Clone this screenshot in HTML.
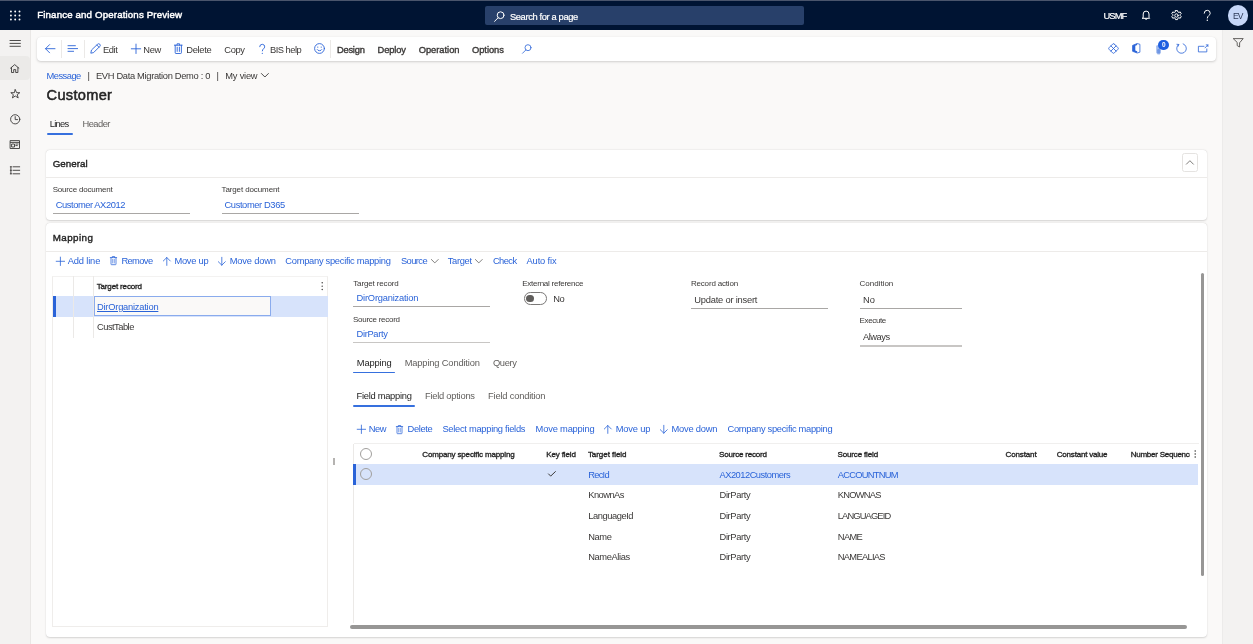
<!DOCTYPE html>
<html><head><meta charset="utf-8"><title>Customer</title>
<style>
*{box-sizing:border-box;margin:0;padding:0}
html,body{width:1253px;height:644px;overflow:hidden}
body{background:#faf9f8;font-family:"Liberation Sans",sans-serif;font-size:9px;color:#323130;position:relative}
.a{position:absolute;white-space:nowrap;line-height:1}
svg{position:absolute;overflow:visible}
.card{background:#fff;border-radius:4px;box-shadow:0 .8px 1.8px rgba(0,0,0,.15),0 0 1px rgba(0,0,0,.1)}
.hl{background:#edebe9;height:1px}
.ul{background:#a9a7a5;height:1.3px}
.vl{background:#ebe9e7;width:1px}
.sb{background:#979695;border-radius:2px}
.s{fill:none;stroke:#2a63d8;stroke-width:.9;stroke-linecap:round;stroke-linejoin:round}
.k{fill:none;stroke:#3b3a39;stroke-width:.9;stroke-linecap:round;stroke-linejoin:round}
.w{fill:none;stroke:#fff;stroke-width:1;stroke-linecap:round;stroke-linejoin:round}
#root{position:absolute;left:0;top:0;width:1253px;height:644px;will-change:transform}

</style></head><body>
<div id="root">
<!-- top bar -->
<div class="a" style="left:0;top:0;width:1253px;height:30px;background:#001433"></div>
<div class="a" style="left:0;top:0;width:1253px;height:1px;background:#4a556c"></div>
<div class="a" style="left:485px;top:6px;width:319px;height:18.5px;background:#28406a;border-radius:2px"></div>
<!-- waffle -->
<svg style="left:10px;top:10px" width="11" height="11" viewBox="0 0 11 11"><g fill="#fff"><circle cx="0.9" cy="1.5" r=".95"/><circle cx="5.2" cy="1.5" r=".95"/><circle cx="9.5" cy="1.5" r=".95"/><circle cx="0.9" cy="5.5" r=".95"/><circle cx="5.2" cy="5.5" r=".95"/><circle cx="9.5" cy="5.5" r=".95"/><circle cx="0.9" cy="9.5" r=".95"/><circle cx="5.2" cy="9.5" r=".95"/><circle cx="9.5" cy="9.5" r=".95"/></g></svg>
<!-- search icon top -->
<svg style="left:494px;top:10.5px" width="11" height="11" viewBox="0 0 11 11"><circle class="w" cx="6.6" cy="4.2" r="3.4"/><path class="w" d="M4.1 6.8L0.6 10.3"/></svg>
<!-- bell -->
<svg style="left:1142px;top:10.4px" width="9" height="11" viewBox="0 0 9 11"><path class="w" d="M1.2 7.4V4a2.9 2.9 0 0 1 5.8 0v3.4l0.7 0.9H0.5zM2.9 8.5a1.25 1.25 0 0 0 2.4 0"/></svg>
<!-- gear -->
<svg style="left:1171px;top:9.8px" width="11" height="11" viewBox="0 0 11 11"><path class="w" d="M4.5 0.6h2l0.4 1.4 1 0.5 1.3-0.6 1 1.7-1 1v1l1 1-1 1.7-1.3-0.6-1 0.5-0.4 1.4h-2l-0.4-1.4-1-0.5-1.3 0.6-1-1.7 1-1v-1l-1-1 1-1.7 1.3 0.6 1-0.5z"/><circle class="w" cx="5.5" cy="5.5" r="1.7"/></svg>
<!-- help -->
<svg style="left:1203px;top:10px" width="9" height="12" viewBox="0 0 9 12"><path class="w" d="M1.2 3.2a3 3 0 0 1 6 0.2c0 2-2.9 2.2-2.9 4.6"/><circle cx="4.3" cy="10.3" r="0.7" fill="#fff"/></svg>
<!-- avatar -->
<div class="a" style="left:1227.7px;top:5.3px;width:20.4px;height:20.4px;border-radius:10.2px;background:#c5d6f8"></div>
<!-- left nav -->
<div class="a" style="left:0;top:30px;width:31px;height:614px;background:#f3f2f1;border-right:1px solid #e9e7e5"></div>
<div class="a" style="left:0;top:56px;width:30px;height:24px;background:#ebeae8;border-radius:0 4px 4px 0"></div>
<svg style="left:10px;top:39.7px" width="11" height="7" viewBox="0 0 11 7"><path class="k" d="M0 0.5h10.4M0 3.4h10.4M0 6.3h10.4"/></svg>
<!-- home -->
<svg style="left:10px;top:64px" width="10" height="9" viewBox="0 0 10 9"><path class="k" d="M0.5 4.2L4.7 0.6l4.2 3.6M1.5 3.6v4.9h2.2V5.6h2v2.9h2.2V3.6"/></svg>
<!-- star -->
<svg style="left:9.5px;top:89px" width="11" height="10" viewBox="0 0 11 10"><path class="k" d="M5.3 0.7l1.3 3h3.2L7.2 5.7l1 3.2-2.9-1.9-2.9 1.9 1-3.2L0.8 3.7H4z"/></svg>
<!-- clock -->
<svg style="left:9.5px;top:114px" width="11" height="11" viewBox="0 0 11 11"><circle class="k" cx="5.2" cy="5.3" r="4.6"/><path class="k" d="M5.2 2.6v3h2.3"/></svg>
<!-- workspace -->
<svg style="left:10px;top:140px" width="10" height="9" viewBox="0 0 10 9"><path class="k" d="M0.5 0.6h9v7.9h-9zM0.5 2.4h9M2 4h2.5v3H2zM5.8 4h2.3M5.8 5.6h1.5"/></svg>
<!-- list -->
<svg style="left:10px;top:166px" width="10" height="9" viewBox="0 0 10 9"><path class="k" d="M3 0.8h6.7M3 4.3h6.7M3 7.8h6.7M0.3 0.8h1.2M0.3 4.3h1.2M0.3 7.8h1.2M0.9 0.8v7"/></svg>
<!-- right nav -->
<div class="a" style="left:1222px;top:30px;width:31px;height:614px;background:#f3f2f1;border-left:1px solid #ecebea"></div>
<svg style="left:1233px;top:38px" width="11" height="10" viewBox="0 0 11 10"><path class="k" style="stroke:#4a4846;stroke-width:.85" d="M0.6 0.6h9.6L6.6 4.8v4.2L4.2 7.6V4.8z"/></svg>
<!-- action bar -->
<div class="a" style="left:37px;top:36.6px;width:1179px;height:24.4px;background:#fff;border-radius:4px;box-shadow:0 1px 2.5px rgba(0,0,0,.17),0 0 1px rgba(0,0,0,.1)"></div>
<div class="a vl" style="left:61px;top:40px;height:18px"></div>
<div class="a vl" style="left:84px;top:40px;height:18px"></div>
<div class="a vl" style="left:330px;top:40px;height:18px"></div>
<!-- back arrow -->
<svg style="left:45px;top:44px" width="11" height="10" viewBox="0 0 11 10"><path class="s" d="M10 4.7H0.6M4.6 0.6L0.5 4.7l4.1 4.1"/></svg>
<!-- lines -->
<svg style="left:67px;top:45px" width="11" height="8" viewBox="0 0 11 8"><path class="s" d="M1 0.7h7.4M1 3.6h9.6M1 6.3h5.6"/></svg>
<!-- pencil -->
<svg style="left:89.5px;top:43px" width="11" height="11" viewBox="0 0 11 11"><path class="s" d="M7.6 1.2a1.5 1.5 0 0 1 2.2 2.2L3.6 9.6 0.8 10.2l0.6-2.8zM6.8 2l2.2 2.2"/></svg>
<!-- plus -->
<svg style="left:131px;top:44px" width="10" height="10" viewBox="0 0 10 10"><path class="s" d="M0.3 4.8h9.4M5 0.1v9.4"/></svg>
<!-- trash -->
<svg style="left:174px;top:43px" width="9" height="11" viewBox="0 0 9 11"><path class="s" d="M0.4 2.2h7.8M3 2.2V0.8h2.6v1.4M1.2 2.2v7.6a0.7 0.7 0 0 0 0.7 0.7h4.8a0.7 0.7 0 0 0 0.7-0.7V2.2M3.2 4.2v4.2M5.4 4.2v4.2"/></svg>
<!-- question blue -->
<svg style="left:258.5px;top:43.5px" width="7" height="11" viewBox="0 0 7 11"><path class="s" d="M0.7 2.7a2.5 2.5 0 0 1 5 0.2c0 1.7-2.4 1.9-2.4 4"/><circle cx="3.3" cy="9.3" r="0.6" fill="#2a63d8"/></svg>
<!-- smiley -->
<svg style="left:313.5px;top:43.4px" width="11" height="11" viewBox="0 0 11 11"><circle class="s" cx="5.5" cy="5.5" r="4.9"/><path class="s" d="M3.2 6.6a2.7 2.7 0 0 0 4.6 0"/><circle cx="3.8" cy="4.1" r="0.6" fill="#2a63d8"/><circle cx="7.2" cy="4.1" r="0.6" fill="#2a63d8"/></svg>
<!-- search blue -->
<svg style="left:521.5px;top:43.5px" width="10" height="10" viewBox="0 0 10 10"><circle class="s" style="stroke-width:.8" cx="6" cy="3.7" r="3"/><path class="s" style="stroke-width:.8" d="M3.8 6L0.5 9.3"/></svg>
<!-- right icons -->
<svg style="left:1108.1px;top:43px" width="11" height="11" viewBox="0 0 11 11"><g transform="translate(5.5,5.5) rotate(45)"><rect class="s" style="stroke-width:.8" x="-3.7" y="-3.7" width="7.4" height="7.4" rx="1.1"/><path class="s" style="stroke-width:.8" d="M0 -3.7V3.7M-3.7 0H3.7"/></g></svg>
<svg style="left:1131.8px;top:43.2px" width="9" height="11" viewBox="0 0 9 11"><path d="M5.2 0.5L7.9 1.3V9.2L5.2 10 0.6 8.3V2.4z" fill="none" stroke="#2a63d8" stroke-width=".8" stroke-linejoin="round"/><path d="M0.6 2.4L5.2 0.5V2.1L3.3 2.8V7.6L5.2 8.3V10L0.6 8.3z" fill="#2a63d8"/></svg>
<svg style="left:1156px;top:44.6px" width="6" height="10" viewBox="0 0 6 10"><rect x="0.2" y="0.2" width="4.6" height="8.4" rx="1" fill="#2a63d8" fill-opacity=".45"/><rect x="1.2" y="4" width="3" height="5.6" rx="1.2" fill="#2a63d8" fill-opacity=".4"/></svg>
<div class="a" style="left:1158.4px;top:39.9px;width:10.6px;height:10.6px;border-radius:5.3px;background:#1e5fe0"></div>
<div class="a" style="left:1158.4px;top:42.2px;width:10.6px;text-align:center;font-size:6.5px;font-weight:bold;color:#fff">0</div>
<svg style="left:1175.8px;top:43.2px" width="12" height="12" viewBox="0 0 12 12"><path class="s" style="stroke-width:.8" d="M7.16 0.84A4.85 4.85 0 1 1 2.72 1.43M0.9 1.3L2.72 1.43L2.2 3.2"/></svg>
<svg style="left:1198.3px;top:44px" width="11" height="9" viewBox="0 0 11 9"><path class="s" style="stroke-width:.8" d="M6 2.3H0.4v5.6h8.4V4.9M8.2 0.9h1.7v1.7M9.9 0.9L7 3.9"/></svg>
<!-- chevron my view -->
<svg style="left:260.5px;top:73px" width="8" height="5" viewBox="0 0 8 5"><path class="k" d="M0.4 0.5l3.5 3.5 3.5-3.5"/></svg>
<!-- page tabs underline -->
<div class="a" style="left:46.8px;top:133.1px;width:25.8px;height:1.5px;background:#3670de;border-radius:1px"></div>
<!-- General card -->
<div class="a card" style="left:46px;top:149.5px;width:1161px;height:70px"></div>
<div class="a hl" style="left:46px;top:177px;width:1161px"></div>
<div class="a" style="left:1181.7px;top:153.3px;width:16.3px;height:18.6px;border:1px solid #e5e3e1;border-radius:2.5px;background:#fff"></div>
<svg style="left:1186px;top:160.2px" width="8" height="5" viewBox="0 0 8 5"><path class="k" style="stroke:#6e6c6a" d="M0.4 4.2l3.5-3.5 3.5 3.5"/></svg>
<div class="a ul" style="left:53px;top:212.8px;width:137px"></div>
<div class="a ul" style="left:221.6px;top:212.8px;width:137px"></div>
<!-- Mapping card -->
<div class="a card" style="left:46px;top:223px;width:1161px;height:414.2px"></div>
<div class="a hl" style="left:46px;top:250.7px;width:1161px"></div>
<!-- mapping toolbar icons -->
<svg style="left:56px;top:256.7px" width="9" height="9" viewBox="0 0 9 9"><path class="s" style="stroke-width:.8" d="M0.2 4.3h8.4M4.4 0.1v8.4"/></svg>
<svg style="left:110px;top:256.3px" width="7" height="9" viewBox="0 0 7 9"><path class="s" style="stroke-width:.75" d="M0.3 1.6h6.4M2.3 1.6V0.5h2.4v1.1M1 1.6v6.5a0.6 0.6 0 0 0 0.6 0.6h3.8a0.6 0.6 0 0 0 0.6-0.6V1.6"/><path class="s" style="stroke-width:.6" d="M2.7 3.3v3.7M4.3 3.3v3.7"/></svg>
<svg style="left:163px;top:256.5px" width="8" height="9" viewBox="0 0 8 9"><path class="s" style="stroke-width:.8" d="M3.8 8.4V0.5M0.3 4L3.8 0.5l3.5 3.5"/></svg>
<svg style="left:218.4px;top:256.7px" width="8" height="9" viewBox="0 0 8 9"><path class="s" style="stroke-width:.8" d="M3.8 0.3V8.2M0.3 4.7L3.8 8.2l3.5-3.5"/></svg>
<svg style="left:430.8px;top:258.6px" width="8" height="5" viewBox="0 0 8 5"><path class="k" style="stroke:#605e5c;stroke-width:.8" d="M0.4 0.5l3.4 3.4 3.4-3.4"/></svg>
<svg style="left:475.4px;top:258.6px" width="8" height="5" viewBox="0 0 8 5"><path class="k" style="stroke:#605e5c;stroke-width:.8" d="M0.4 0.5l3.4 3.4 3.4-3.4"/></svg>
<!-- left grid -->
<div class="a" style="left:52.2px;top:276px;width:276.3px;height:351px;border:1px solid #efedeb;border-top-color:#f3f2f1"></div>
<div class="a" style="left:53px;top:296.3px;width:275px;height:20.5px;background:#d7e3fb"></div>
<div class="a" style="left:52.6px;top:296.3px;width:3px;height:20.5px;background:#2a63d8"></div>
<div class="a vl" style="left:73px;top:276px;height:61.5px"></div>
<div class="a vl" style="left:93.2px;top:276px;height:61.5px"></div>
<div class="a" style="left:93.8px;top:296.3px;width:177.5px;height:20.2px;background:#faf9f8;border:1px solid #8aabed"></div>
<svg style="left:320.8px;top:281.9px" width="3" height="9" viewBox="0 0 3 9"><g fill="#323130"><circle cx="1.2" cy="0.8" r="0.7"/><circle cx="1.2" cy="4.15" r="0.7"/><circle cx="1.2" cy="7.5" r="0.7"/></g></svg>
<!-- splitter -->
<div class="a" style="left:332.8px;top:457.9px;width:2px;height:7px;background:#b5b3b1"></div>
<!-- detail underlines -->
<div class="a ul" style="left:353.2px;top:306.1px;width:137.3px"></div>
<div class="a ul" style="left:353.2px;top:342px;width:137.3px;background:#c8c6c4"></div>
<div class="a ul" style="left:691.2px;top:308px;width:137px"></div>
<div class="a ul" style="left:859.8px;top:308px;width:102.2px"></div>
<div class="a ul" style="left:859.8px;top:345.3px;width:102.2px;height:1.4px;background:#c8c6c4"></div>
<!-- toggle -->
<div class="a" style="left:523.9px;top:291.9px;width:23.4px;height:12.8px;border:1px solid #7a7877;border-radius:6.4px;background:#fff"></div>
<div class="a" style="left:526.1px;top:294.5px;width:7.6px;height:7.6px;border-radius:4px;background:#605e5c"></div>
<!-- tab underlines -->
<div class="a" style="left:353.2px;top:371.7px;width:41.5px;height:1.5px;background:#3670de;border-radius:1px"></div>
<div class="a" style="left:353.2px;top:405.1px;width:62.1px;height:1.5px;background:#3670de;border-radius:1px"></div>
<!-- field toolbar icons -->
<svg style="left:356.9px;top:424.9px" width="9" height="9" viewBox="0 0 9 9"><path class="s" style="stroke-width:.8" d="M0.2 4.3h8.4M4.4 0.1v8.4"/></svg>
<svg style="left:396px;top:424.5px" width="7" height="9" viewBox="0 0 7 9"><path class="s" style="stroke-width:.75" d="M0.3 1.6h6.4M2.3 1.6V0.5h2.4v1.1M1 1.6v6.5a0.6 0.6 0 0 0 0.6 0.6h3.8a0.6 0.6 0 0 0 0.6-0.6V1.6"/><path class="s" style="stroke-width:.6" d="M2.7 3.3v3.7M4.3 3.3v3.7"/></svg>
<svg style="left:604.2px;top:424.7px" width="8" height="9" viewBox="0 0 8 9"><path class="s" style="stroke-width:.8" d="M3.8 8.4V0.5M0.3 4L3.8 0.5l3.5 3.5"/></svg>
<svg style="left:659.9px;top:424.9px" width="8" height="9" viewBox="0 0 8 9"><path class="s" style="stroke-width:.8" d="M3.8 0.3V8.2M0.3 4.7L3.8 8.2l3.5-3.5"/></svg>
<!-- right grid -->
<div class="a hl" style="left:353.5px;top:443.4px;width:845px;background:#f0efee"></div>
<div class="a vl" style="left:353.3px;top:444px;height:178.5px"></div>
<div class="a" style="left:354px;top:463.5px;width:844.2px;height:21px;background:#d7e3fb"></div>
<div class="a" style="left:353.4px;top:463.5px;width:2.8px;height:21px;background:#2a63d8"></div>
<div class="a" style="left:360.1px;top:447.9px;width:11.7px;height:11.7px;border:1px solid #a19f9d;border-radius:6px;background:#fff"></div>
<div class="a" style="left:360.1px;top:468.4px;width:11.7px;height:11.7px;border:1px solid #a19f9d;border-radius:6px"></div>
<svg style="left:548.4px;top:471.2px" width="9" height="6" viewBox="0 0 9 6"><path class="k" style="stroke-width:1" d="M0.5 2.9l2.2 2.2L7.4 0.6"/></svg>
<div class="a" style="left:1190.5px;top:446px;width:7.5px;height:17px;background:#fff"></div>
<svg style="left:1194.2px;top:449.6px" width="3" height="9" viewBox="0 0 3 9"><g fill="#323130"><circle cx="1.2" cy="0.9" r="0.75"/><circle cx="1.2" cy="4" r="0.75"/><circle cx="1.2" cy="7.1" r="0.75"/></g></svg>
<!-- scrollbars -->
<div class="a sb" style="left:1200.5px;top:273px;width:3.8px;height:302.6px"></div>
<div class="a sb" style="left:349.6px;top:625.2px;width:837.4px;height:3.8px"></div>

<div class="a" style="left:37.2px;top:10.1px;font-size:9.7px;letter-spacing:0.15px;color:#fff;-webkit-text-stroke:0.45px #fff;">Finance and Operations Preview</div>
<div class="a" style="left:509.9px;top:12.7px;font-size:9.33px;letter-spacing:-0.36px;color:#fff;-webkit-text-stroke:.2px #fff;">Search for a page</div>
<div class="a" style="left:1103.6px;top:12.1px;font-size:9.33px;letter-spacing:-0.96px;color:#fff;-webkit-text-stroke:.2px #fff;">USMF</div>
<div class="a" style="left:1233.1px;top:11.6px;font-size:8.5px;letter-spacing:-0.97px;color:#2b3857;">EV</div>
<div class="a" style="left:102.9px;top:46.1px;font-size:9.33px;letter-spacing:-0.34px;color:#3a3837;">Edit</div>
<div class="a" style="left:143.3px;top:46.1px;font-size:9.33px;letter-spacing:-0.39px;color:#3a3837;">New</div>
<div class="a" style="left:186.2px;top:46.1px;font-size:9.33px;letter-spacing:-0.28px;color:#3a3837;">Delete</div>
<div class="a" style="left:224.3px;top:46.1px;font-size:9.33px;letter-spacing:-0.35px;color:#3a3837;">Copy</div>
<div class="a" style="left:269.9px;top:46.1px;font-size:9.33px;letter-spacing:-0.48px;color:#3a3837;">BIS help</div>
<div class="a" style="left:336.9px;top:46.1px;font-size:9.33px;letter-spacing:-0.21px;color:#3a3837;-webkit-text-stroke:0.37px #3a3837;">Design</div>
<div class="a" style="left:377.5px;top:46.1px;font-size:9.33px;letter-spacing:-0.11px;color:#3a3837;-webkit-text-stroke:0.37px #3a3837;">Deploy</div>
<div class="a" style="left:418.7px;top:46.1px;font-size:9.33px;letter-spacing:-0.02px;color:#3a3837;-webkit-text-stroke:0.37px #3a3837;">Operation</div>
<div class="a" style="left:472.0px;top:46.1px;font-size:9.33px;letter-spacing:-0.04px;color:#3a3837;-webkit-text-stroke:0.37px #3a3837;">Options</div>
<div class="a" style="left:46.5px;top:71.7px;font-size:9.33px;letter-spacing:-0.51px;color:#2a63d8;">Message</div>
<div class="a" style="left:87.5px;top:71.7px;font-size:9.33px;letter-spacing:-0.44px;color:#3a3837;">|</div>
<div class="a" style="left:95.9px;top:71.7px;font-size:9.33px;letter-spacing:-0.32px;color:#3a3837;">EVH Data Migration Demo : 0</div>
<div class="a" style="left:216.6px;top:71.7px;font-size:9.33px;letter-spacing:-0.44px;color:#3a3837;">|</div>
<div class="a" style="left:225.3px;top:71.7px;font-size:9.33px;letter-spacing:-0.23px;color:#3a3837;">My view</div>
<div class="a" style="left:46.6px;top:87.5px;font-size:14.6px;letter-spacing:0.30px;color:#242424;-webkit-text-stroke:0.52px #242424;">Customer</div>
<div class="a" style="left:49.7px;top:120.4px;font-size:9.33px;letter-spacing:-0.68px;color:#242424;">Lines</div>
<div class="a" style="left:82.5px;top:120.4px;font-size:9.33px;letter-spacing:-0.53px;color:#605e5c;">Header</div>
<div class="a" style="left:52.7px;top:158.8px;font-size:9.8px;letter-spacing:0.03px;color:#242424;-webkit-text-stroke:0.38px #242424;">General</div>
<div class="a" style="left:52.7px;top:185.9px;font-size:8px;letter-spacing:-0.19px;color:#3a3837;">Source document</div>
<div class="a" style="left:55.7px;top:200.9px;font-size:9.33px;letter-spacing:-0.43px;color:#2a63d8;">Customer AX2012</div>
<div class="a" style="left:221.5px;top:185.9px;font-size:8px;letter-spacing:-0.11px;color:#3a3837;">Target document</div>
<div class="a" style="left:224.5px;top:200.9px;font-size:9.33px;letter-spacing:-0.39px;color:#2a63d8;">Customer D365</div>
<div class="a" style="left:52.7px;top:232.8px;font-size:9.8px;letter-spacing:0.43px;color:#242424;-webkit-text-stroke:0.38px #242424;">Mapping</div>
<div class="a" style="left:67.7px;top:256.9px;font-size:9.33px;letter-spacing:-0.15px;color:#2a63d8;">Add line</div>
<div class="a" style="left:121.4px;top:256.9px;font-size:9.33px;letter-spacing:-0.61px;color:#2a63d8;">Remove</div>
<div class="a" style="left:174.4px;top:256.9px;font-size:9.33px;letter-spacing:-0.24px;color:#2a63d8;">Move up</div>
<div class="a" style="left:229.7px;top:256.9px;font-size:9.33px;letter-spacing:-0.17px;color:#2a63d8;">Move down</div>
<div class="a" style="left:285.3px;top:256.9px;font-size:9.33px;letter-spacing:-0.28px;color:#2a63d8;">Company specific mapping</div>
<div class="a" style="left:400.9px;top:256.9px;font-size:9.33px;letter-spacing:-0.56px;color:#2a63d8;">Source</div>
<div class="a" style="left:447.7px;top:256.9px;font-size:9.33px;letter-spacing:-0.32px;color:#2a63d8;">Target</div>
<div class="a" style="left:492.9px;top:256.9px;font-size:9.33px;letter-spacing:-0.55px;color:#2a63d8;">Check</div>
<div class="a" style="left:526.5px;top:256.9px;font-size:9.33px;letter-spacing:-0.14px;color:#2a63d8;">Auto fix</div>
<div class="a" style="left:96.7px;top:282.7px;font-size:8px;letter-spacing:-0.15px;color:#242424;-webkit-text-stroke:0.33px #242424;">Target record</div>
<div class="a" style="left:97.0px;top:302.8px;font-size:9.33px;letter-spacing:-0.23px;color:#2a63d8;text-decoration:underline;">DirOrganization</div>
<div class="a" style="left:97.0px;top:323.0px;font-size:9.33px;letter-spacing:-0.52px;color:#3a3837;">CustTable</div>
<div class="a" style="left:353.2px;top:279.9px;font-size:8px;letter-spacing:-0.13px;color:#3a3837;">Target record</div>
<div class="a" style="left:356.6px;top:294.3px;font-size:9.33px;letter-spacing:-0.22px;color:#2a63d8;">DirOrganization</div>
<div class="a" style="left:353.0px;top:315.8px;font-size:8px;letter-spacing:-0.27px;color:#3a3837;">Source record</div>
<div class="a" style="left:356.6px;top:330.0px;font-size:9.33px;letter-spacing:-0.34px;color:#2a63d8;">DirParty</div>
<div class="a" style="left:522.2px;top:279.9px;font-size:8px;letter-spacing:-0.24px;color:#3a3837;">External reference</div>
<div class="a" style="left:553.2px;top:294.5px;font-size:9.33px;letter-spacing:-0.42px;color:#3a3837;">No</div>
<div class="a" style="left:690.9px;top:279.9px;font-size:8px;letter-spacing:-0.17px;color:#3a3837;">Record action</div>
<div class="a" style="left:694.3px;top:295.6px;font-size:9.33px;letter-spacing:-0.22px;color:#3a3837;">Update or insert</div>
<div class="a" style="left:859.6px;top:279.9px;font-size:8px;letter-spacing:-0.01px;color:#3a3837;">Condition</div>
<div class="a" style="left:863.0px;top:295.6px;font-size:9.33px;letter-spacing:-0.02px;color:#3a3837;">No</div>
<div class="a" style="left:859.6px;top:316.6px;font-size:8px;letter-spacing:-0.37px;color:#3a3837;">Execute</div>
<div class="a" style="left:863.0px;top:332.6px;font-size:9.33px;letter-spacing:-0.49px;color:#3a3837;">Always</div>
<div class="a" style="left:356.8px;top:359.3px;font-size:9.33px;letter-spacing:-0.14px;color:#242424;">Mapping</div>
<div class="a" style="left:404.7px;top:359.3px;font-size:9.33px;letter-spacing:-0.16px;color:#605e5c;">Mapping Condition</div>
<div class="a" style="left:492.9px;top:359.3px;font-size:9.33px;letter-spacing:-0.34px;color:#605e5c;">Query</div>
<div class="a" style="left:356.6px;top:392.3px;font-size:9.33px;letter-spacing:-0.28px;color:#242424;">Field mapping</div>
<div class="a" style="left:425.0px;top:392.3px;font-size:9.33px;letter-spacing:-0.24px;color:#605e5c;">Field options</div>
<div class="a" style="left:488.0px;top:392.3px;font-size:9.33px;letter-spacing:-0.19px;color:#605e5c;">Field condition</div>
<div class="a" style="left:368.7px;top:425.1px;font-size:9.33px;letter-spacing:-0.46px;color:#2a63d8;">New</div>
<div class="a" style="left:407.5px;top:425.1px;font-size:9.33px;letter-spacing:-0.36px;color:#2a63d8;">Delete</div>
<div class="a" style="left:442.4px;top:425.1px;font-size:9.33px;letter-spacing:-0.28px;color:#2a63d8;">Select mapping fields</div>
<div class="a" style="left:535.6px;top:425.1px;font-size:9.33px;letter-spacing:-0.19px;color:#2a63d8;">Move mapping</div>
<div class="a" style="left:615.7px;top:425.1px;font-size:9.33px;letter-spacing:-0.18px;color:#2a63d8;">Move up</div>
<div class="a" style="left:671.4px;top:425.1px;font-size:9.33px;letter-spacing:-0.20px;color:#2a63d8;">Move down</div>
<div class="a" style="left:727.5px;top:425.1px;font-size:9.33px;letter-spacing:-0.30px;color:#2a63d8;">Company specific mapping</div>
<div class="a" style="left:422.3px;top:451.2px;font-size:8px;letter-spacing:-0.16px;color:#242424;-webkit-text-stroke:0.33px #242424;">Company specific mapping</div>
<div class="a" style="left:546.3px;top:451.2px;font-size:8px;letter-spacing:-0.14px;color:#242424;-webkit-text-stroke:0.33px #242424;">Key field</div>
<div class="a" style="left:587.9px;top:451.2px;font-size:8px;letter-spacing:-0.05px;color:#242424;-webkit-text-stroke:0.33px #242424;">Target field</div>
<div class="a" style="left:719.1px;top:451.2px;font-size:8px;letter-spacing:-0.20px;color:#242424;-webkit-text-stroke:0.33px #242424;">Source record</div>
<div class="a" style="left:837.5px;top:451.2px;font-size:8px;letter-spacing:-0.15px;color:#242424;-webkit-text-stroke:0.33px #242424;">Source field</div>
<div class="a" style="left:1005.5px;top:451.2px;font-size:8px;letter-spacing:-0.13px;color:#242424;-webkit-text-stroke:0.33px #242424;">Constant</div>
<div class="a" style="left:1056.8px;top:451.2px;font-size:8px;letter-spacing:-0.20px;color:#242424;-webkit-text-stroke:0.33px #242424;">Constant value</div>
<div class="a" style="left:1130.7px;top:451.2px;font-size:8px;letter-spacing:-0.24px;color:#242424;-webkit-text-stroke:0.33px #242424;width:59.5px;overflow:hidden;">Number Sequence</div>
<div class="a" style="left:588.2px;top:470.8px;font-size:9.33px;letter-spacing:-0.73px;color:#2a63d8;">RecId</div>
<div class="a" style="left:719.5px;top:470.8px;font-size:9.33px;letter-spacing:-0.51px;color:#2a63d8;">AX2012Customers</div>
<div class="a" style="left:837.8px;top:470.8px;font-size:9.33px;letter-spacing:-0.75px;color:#2a63d8;">ACCOUNTNUM</div>
<div class="a" style="left:588.2px;top:491.3px;font-size:9.33px;letter-spacing:-0.52px;color:#3a3837;">KnownAs</div>
<div class="a" style="left:719.5px;top:491.3px;font-size:9.33px;letter-spacing:-0.36px;color:#3a3837;">DirParty</div>
<div class="a" style="left:837.8px;top:491.3px;font-size:9.33px;letter-spacing:-0.77px;color:#3a3837;">KNOWNAS</div>
<div class="a" style="left:588.2px;top:512.0px;font-size:9.33px;letter-spacing:-0.44px;color:#3a3837;">LanguageId</div>
<div class="a" style="left:719.5px;top:512.0px;font-size:9.33px;letter-spacing:-0.36px;color:#3a3837;">DirParty</div>
<div class="a" style="left:837.8px;top:512.0px;font-size:9.33px;letter-spacing:-0.87px;color:#3a3837;">LANGUAGEID</div>
<div class="a" style="left:588.2px;top:532.6px;font-size:9.33px;letter-spacing:-0.40px;color:#3a3837;">Name</div>
<div class="a" style="left:719.5px;top:532.6px;font-size:9.33px;letter-spacing:-0.36px;color:#3a3837;">DirParty</div>
<div class="a" style="left:837.8px;top:532.6px;font-size:9.33px;letter-spacing:-0.64px;color:#3a3837;">NAME</div>
<div class="a" style="left:588.2px;top:553.4px;font-size:9.33px;letter-spacing:-0.40px;color:#3a3837;">NameAlias</div>
<div class="a" style="left:719.5px;top:553.4px;font-size:9.33px;letter-spacing:-0.36px;color:#3a3837;">DirParty</div>
<div class="a" style="left:837.8px;top:553.4px;font-size:9.33px;letter-spacing:-0.70px;color:#3a3837;">NAMEALIAS</div>
</div>
</body></html>
